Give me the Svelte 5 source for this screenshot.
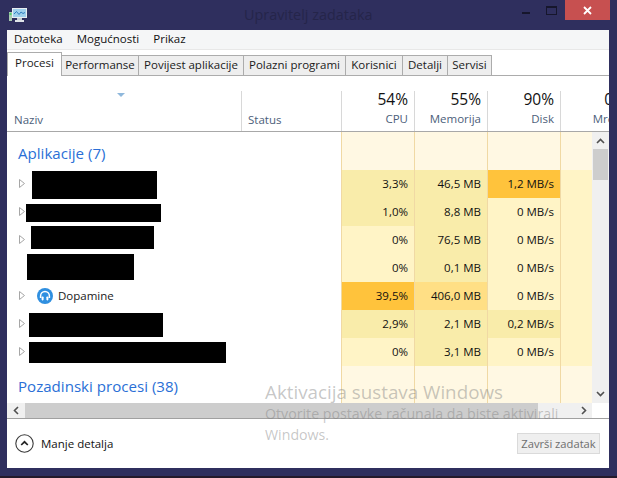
<script lang="ts">
	const tabs = ['Procesi', 'Performanse', 'Povijest aplikacije', 'Polazni programi', 'Korisnici', 'Detalji', 'Servisi'];
	const menu = ['Datoteka', 'Mogućnosti', 'Prikaz'];

	const columns = [
		{ pct: '54%', label: 'CPU' },
		{ pct: '55%', label: 'Memorija' },
		{ pct: '90%', label: 'Disk' },
		{ pct: '0%', label: 'Mreža' }
	];

	// heat: 0 lightest, 1 light, 2 mid, 4 hottest
	const rows = [
		{ cpu: ['3,3%', 1], mem: ['46,5 MB', 1], disk: ['1,2 MB/s', 4], mask: 'm1' },
		{ cpu: ['1,0%', 1], mem: ['8,8 MB', 1], disk: ['0 MB/s', 0], mask: 'm2' },
		{ cpu: ['0%', 0], mem: ['76,5 MB', 1], disk: ['0 MB/s', 0], mask: 'm3' },
		{ cpu: ['0%', 0], mem: ['0,1 MB', 1], disk: ['0 MB/s', 0], mask: 'm4', noArrow: true },
		{ cpu: ['39,5%', 4], mem: ['406,0 MB', 2], disk: ['0 MB/s', 0], name: 'Dopamine' },
		{ cpu: ['2,9%', 1], mem: ['2,1 MB', 1], disk: ['0,2 MB/s', 1], mask: 'm5' },
		{ cpu: ['0%', 0], mem: ['3,1 MB', 1], disk: ['0 MB/s', 0], mask: 'm6' }
	];
</script>

<div class="window">
	<header class="titlebar">
		<svg class="app-icon" width="18" height="16" viewBox="0 0 18 16">
			<rect x="0" y="5" width="3" height="9" fill="#a9c9b0" />
			<rect x="0.5" y="6" width="2" height="2" fill="#4fd06a" />
			<rect x="3" y="1" width="15" height="10" fill="#e8eef2" />
			<rect x="4" y="2" width="13" height="8" fill="#9fd0ec" />
			<path d="M5 7 L7.5 4.5 L10 7.5 L12 5 L14 6.5 L16 5.5" fill="none" stroke="#2f7fc0" stroke-width="1" />
			<rect x="8" y="11" width="5" height="2" fill="#c4ccd2" />
			<rect x="6" y="13" width="9" height="2" fill="#dfe4e8" />
		</svg>
		<span class="title">Upravitelj zadataka</span>
		<div class="controls">
			<span class="min"></span>
			<span class="max"></span>
			<span class="close">
				<svg width="9" height="9" viewBox="0 0 9 9">
					<path d="M1 1 L8 8 M8 1 L1 8" stroke="#fff" stroke-width="1.8" />
				</svg>
			</span>
		</div>
	</header>

	<main class="client">
		<nav class="menu">
			{#each menu as item}
				<span>{item}</span>
			{/each}
		</nav>

		<div class="tabs">
			{#each tabs as tab, i}
				<span class="tab" class:active={i === 0}>{tab}</span>
			{/each}
		</div>

		<div class="head">
			<div class="head-name">
				<svg class="sort" width="8" height="4" viewBox="0 0 8 4"><path d="M0 0 H8 L4 4 Z" fill="#8fb8dc" /></svg>
				<span>Naziv</span>
			</div>
			<div class="head-status"><span>Status</span></div>
			{#each columns as col}
				<div class="head-col">
					<span class="pct">{col.pct}</span>
					<span class="lbl">{col.label}</span>
				</div>
			{/each}
		</div>

		<div class="body">
			<div class="list">
				<div class="row group-row first">
					<div class="name"><span class="group">Aplikacije (7)</span></div>
					<div class="status"></div>
					<div class="cell heat-g"></div>
					<div class="cell heat-g"></div>
					<div class="cell heat-g"></div>
					<div class="cell heat-g"></div>
				</div>

				{#each rows as row}
					<div class="row">
						<div class="name">
							{#if !row.noArrow}
								<svg class="arrow" width="6" height="9" viewBox="0 0 6 9">
									<path d="M0.5 0.5 L5.5 4.5 L0.5 8.5 Z" fill="#fff" stroke="#a6a6a6" />
								</svg>
							{/if}
							{#if row.name}
								<svg class="dopamine" width="16" height="16" viewBox="0 0 16 16">
									<circle cx="8" cy="8" r="8" fill="#2f8fe0" />
									<path d="M3.6 10 V8 A4.4 4.4 0 0 1 12.4 8 V10" fill="none" stroke="#fff" stroke-width="1.5" />
									<rect x="4.6" y="8.4" width="2" height="4" rx="0.8" fill="#fff" />
									<rect x="9.4" y="8.4" width="2" height="4" rx="0.8" fill="#fff" />
								</svg>
								<span>{row.name}</span>
							{/if}
							{#if row.mask}
								<span class="redact {row.mask}"></span>
							{/if}
						</div>
						<div class="status"></div>
						<div class="cell heat-{row.cpu[1]}">{row.cpu[0]}</div>
						<div class="cell heat-{row.mem[1]}">{row.mem[0]}</div>
						<div class="cell heat-{row.disk[1]}">{row.disk[0]}</div>
						<div class="cell heat-0">0 Mb/s</div>
					</div>
				{/each}

				<div class="row group-row last">
					<div class="name"><span class="group">Pozadinski procesi (38)</span></div>
					<div class="status"></div>
					<div class="cell heat-g"></div>
					<div class="cell heat-g"></div>
					<div class="cell heat-g"></div>
					<div class="cell heat-g"></div>
				</div>
			</div>

			<div class="vscroll">
				<svg class="up" width="9" height="6" viewBox="0 0 9 6"><path d="M1 5 L4.5 1.5 L8 5" fill="none" stroke="#505050" stroke-width="1.6" /></svg>
				<div class="vthumb"></div>
				<svg class="down" width="9" height="6" viewBox="0 0 9 6"><path d="M1 1 L4.5 4.5 L8 1" fill="none" stroke="#505050" stroke-width="1.6" /></svg>
			</div>
		</div>

		<div class="hscroll">
			<div class="hbar">
				<svg class="left" width="6" height="9" viewBox="0 0 6 9"><path d="M5 1 L1.5 4.5 L5 8" fill="none" stroke="#505050" stroke-width="1.6" /></svg>
				<div class="hthumb"></div>
				<svg class="right" width="6" height="9" viewBox="0 0 6 9"><path d="M1 1 L4.5 4.5 L1 8" fill="none" stroke="#505050" stroke-width="1.6" /></svg>
			</div>
		</div>

		<footer class="footer">
			<div class="less">
				<svg width="19" height="19" viewBox="0 0 19 19">
					<circle cx="9.5" cy="9.5" r="8.7" fill="#fff" stroke="#3a3a3a" stroke-width="1.1" />
					<path d="M6.2 11 L9.5 7.8 L12.8 11" fill="none" stroke="#222" stroke-width="1.7" />
				</svg>
				<span>Manje detalja</span>
			</div>
			<button class="end" disabled>Završi zadatak</button>
		</footer>

		<div class="watermark">
			<div class="wm-title">Aktivacija sustava Windows</div>
			<div class="wm-text">Otvorite postavke računala da biste aktivirali<br />Windows.</div>
		</div>
	</main>

	<div class="strip"></div>
</div>

<style>
	:global(body) {
		margin: 0;
		background: #2f2f5e;
		overflow: hidden;
	}

	.window {
		position: relative;
		width: 617px;
		height: 478px;
		display: flex;
		flex-direction: column;
		font-family: 'Open Sans', 'Noto Sans', sans-serif;
		font-size: 11.5px;
		color: #1a1a1a;
		background: #2f2f5e;
	}

	.titlebar {
		height: 30px;
		flex: none;
		position: relative;
		display: flex;
	}

	.app-icon {
		margin: 7px 0 0 9px;
	}

	.title {
		position: absolute;
		left: 244px;
		top: 5px;
		font-size: 14.4px;
		color: #25254a;
	}

	.controls {
		margin-left: auto;
		display: flex;
		margin-right: 7px;
	}

	.min {
		width: 8px;
		height: 2px;
		background: #16162c;
		margin: 12px 16px 0 0;
	}

	.max {
		width: 9px;
		height: 6px;
		border: 1px solid #16162c;
		border-top-width: 2px;
		margin: 6px 8px 0 0;
	}

	.close {
		width: 45px;
		height: 20px;
		background: #c75050;
		display: flex;
		align-items: center;
		justify-content: center;
	}

	.client {
		position: relative;
		margin: 0 8px 0 7px;
		width: 602px;
		height: 438px;
		background: #fff;
		flex: none;
		overflow: hidden;
	}

	.menu {
		height: 19px;
		background: #f5f6f7;
		border-bottom: 1px solid #e8e8e8;
		display: flex;
		gap: 14px;
		padding-left: 7px;
		line-height: 18px;
		color: #111;
	}

	.tabs {
		height: 25px;
		display: grid;
		grid-template-columns: 54px 77px 105px 102px 57px 45px 44px;
		align-items: end;
		border-bottom: 1px solid #acacac;
	}

	.tab {
		height: 19px;
		line-height: 18px;
		text-align: center;
		white-space: nowrap;
		margin-right: -1px;
		border: 1px solid #acacac;
		border-bottom: none;
		background: #eeeeee;
		position: relative;
	}

	.tab.active {
		height: 23px;
		line-height: 19px;
		background: #fff;
		margin-bottom: -1px;
		z-index: 1;
	}

	.head {
		display: grid;
		grid-template-columns: 235px 100px 73px 73px 73px 76px;
		height: 56px;
		width: 602px;
		overflow: hidden;
		border-bottom: 1px solid #a8a8a8;
		box-sizing: border-box;
	}

	.head-name,
	.head-status,
	.head-col {
		margin-top: 15px;
		height: 40px;
		border-right: 1px solid #d8d8d8;
		box-sizing: border-box;
		position: relative;
		display: flex;
		flex-direction: column;
		justify-content: flex-end;
		color: #4c607a;
		padding-bottom: 4px;
	}

	.head-name {
		padding-left: 7px;
	}

	.head-status {
		padding-left: 6px;
	}

	.sort {
		position: absolute;
		left: 110px;
		top: 2px;
	}

	.head-col {
		align-items: flex-end;
		padding-right: 6px;
		justify-content: flex-start;
		padding-bottom: 0;
	}

	.head-col:last-child {
		padding-right: 10px;
	}

	.pct {
		font-size: 15.5px;
		line-height: 20px;
		margin-top: -2px;
		color: #111;
	}

	.lbl {
		line-height: 19px;
		margin-top: 0;
	}

	.body {
		display: flex;
		height: 271px;
	}

	.list {
		width: 585px;
		overflow: hidden;
	}

	.row {
		display: grid;
		grid-template-columns: 235px 100px 73px 73px 73px 76px;
		height: 28px;
	}

	.group-row.first {
		height: 38px;
	}

	.group-row.last {
		height: 37px;
	}

	.group-row.first .group {
		margin-top: 4px;
	}

	.group-row.last .group {
		margin-top: 4px;
	}

	.name {
		position: relative;
		display: flex;
		align-items: center;
		padding-bottom: 1px;
		box-sizing: border-box;
	}

	.group {
		font-size: 15.1px;
		color: #2a6fd6;
		margin-left: 11px;
	}

	.arrow {
		margin-left: 12px;
	}

	.dopamine {
		margin-left: 12px;
		margin-right: 5px;
	}

	.redact {
		position: absolute;
		background: #000;
		display: block;
	}

	.m1 {
		left: 25px;
		top: 1px;
		width: 125px;
		height: 28px;
	}

	.m2 {
		left: 19px;
		top: 6px;
		width: 135px;
		height: 18px;
	}

	.m3 {
		left: 24px;
		top: 0;
		width: 123px;
		height: 23px;
	}

	.m4 {
		left: 20px;
		top: 0;
		width: 107px;
		height: 26px;
	}

	.m5 {
		left: 22px;
		top: 3px;
		width: 134px;
		height: 24px;
	}

	.m6 {
		left: 22px;
		top: 4px;
		width: 197px;
		height: 21px;
	}

	.status {
		border-right: 1px solid #f0d9a4;
	}

	.cell {
		box-sizing: border-box;
		text-align: right;
		padding-right: 6px;
		line-height: 27px;
		border-right: 1px solid #f0d9a4;
		white-space: nowrap;
		color: #111;
	}

	.heat-g {
		background: #fff8e3;
	}

	.heat-0 {
		background: #fff4c6;
	}

	.heat-1 {
		background: #f9ecaa;
	}

	.heat-2 {
		background: #ffdf85;
	}

	.heat-4 {
		background: #ffc33c;
	}

	.vscroll {
		width: 17px;
		background: #f0f0f0;
		position: relative;
		display: flex;
		flex-direction: column;
		align-items: center;
	}

	.up {
		margin-top: 6px;
		flex: none;
	}

	.vthumb {
		width: 15px;
		height: 31px;
		margin-top: 5px;
		background: #cdcdcd;
	}

	.down {
		margin-top: auto;
		margin-bottom: 6px;
	}

	.hscroll {
		height: 15px;
		border-bottom: 1px solid #a0a0a0;
		background: #fff;
	}

	.hbar {
		width: 585px;
		height: 15px;
		background: #f0f0f0;
		display: flex;
		align-items: center;
	}

	.left {
		margin-left: 6px;
	}

	.hthumb {
		width: 513px;
		height: 15px;
		margin-left: 6px;
		background: #cdcdcd;
	}

	.right {
		margin-left: auto;
		margin-right: 5px;
	}

	.footer {
		height: 49px;
		display: flex;
		align-items: center;
		padding: 0 9px 0 8px;
	}

	.less {
		display: flex;
		align-items: center;
		gap: 7px;
		color: #111;
	}

	.end {
		margin-left: auto;
		width: 83px;
		height: 21px;
		padding: 0;
		background: #efefef;
		border: 1px solid #dadada;
		font: inherit;
		font-size: 11.2px;
		color: #6d6d6d;
		white-space: nowrap;
		overflow: hidden;
	}

	.watermark {
		position: absolute;
		left: 258px;
		top: 350px;
		color: rgba(130, 130, 130, 0.45);
		pointer-events: none;
	}

	.wm-title {
		font-size: 18.8px;
		line-height: 24px;
	}

	.wm-text {
		font-size: 14.2px;
		line-height: 21px;
		margin-top: -1px;
	}

	.strip {
		height: 2px;
		margin-top: 8px;
		background: #241a2b;
		flex: none;
	}
</style>
